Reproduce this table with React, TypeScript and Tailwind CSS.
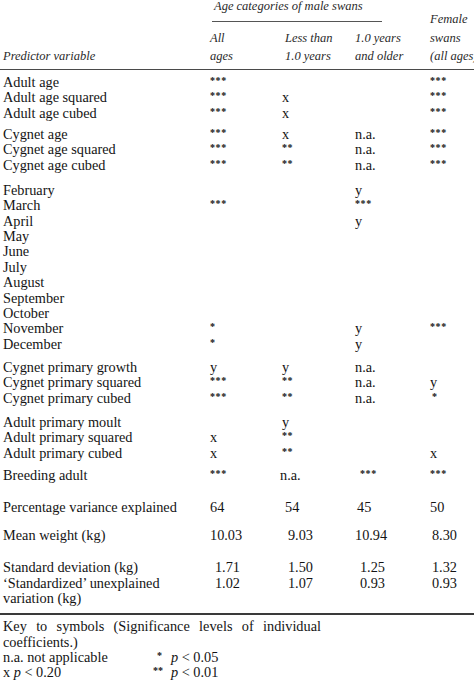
import React from "react";

type Cell = string | null;

const COLS = ["w-[72px]", "w-[73px]", "w-[75px]", "w-[44px]"];

function Sym({ v }: { v: string }) {
  if (/^\*+$/.test(v)) {
    return <span className="relative -top-[3px] text-[10px] font-bold leading-none tracking-[0.6px]">{v}</span>;
  }
  return <span>{v}</span>;
}

function Row({ label, c, off }: { label: React.ReactNode; c: Cell[]; off?: string[] }) {
  return (
    <div className="flex h-[15.4px] leading-[15.4px]">
      <div className="w-[210px] shrink-0 pl-[3px] whitespace-nowrap">{label}</div>
      {c.map((v, i) => (
        <div key={i} className={`${COLS[i]} shrink-0 whitespace-nowrap`}>
          {v ? (
            <div className={off && off[i] ? off[i] : ""}>
              <Sym v={v} />
            </div>
          ) : null}
        </div>
      ))}
    </div>
  );
}

function NumRow({ label, c }: { label: React.ReactNode; c: string[] }) {
  const w = ["w-[30px]", "w-[31px]", "w-[30px]", "w-[27px]"];
  return (
    <div className="flex leading-[15.4px]">
      <div className="w-[210px] shrink-0 pl-[3px]">{label}</div>
      {c.map((v, i) => (
        <div key={i} className={`${COLS[i]} shrink-0 whitespace-nowrap`}>
          <div className={`${w[i]} text-right`}>{v}</div>
        </div>
      ))}
    </div>
  );
}

export default function App() {
  return (
    <div
      className="w-[474px] h-[683px] overflow-hidden bg-white text-[#141414] text-[14.3px]"
      style={{ fontFamily: '"Liberation Serif", "DejaVu Serif", serif' }}
    >
      {/* Header */}
      <div className="flex items-end border-b border-[#4a4a4a] pb-[3px] italic text-[12.5px] text-[#2a2a2a]">
        <div className="w-[210px] shrink-0 pl-[3px] leading-[18.5px]">Predictor variable</div>
        <div className="w-[220px] shrink-0">
          <div className="leading-[12px] pl-[4px] whitespace-nowrap">Age categories of male swans</div>
          <div className="mt-[9px] ml-[2px] w-[170px] h-px bg-[#555]" />
          <div className="mt-[6.75px] flex leading-[18.5px]">
            <div className="w-[72px] shrink-0">
              <div>All</div>
              <div>ages</div>
            </div>
            <div className="w-[73px] shrink-0 pl-[3px]">
              <div>Less than</div>
              <div>1.0 years</div>
            </div>
            <div className="w-[75px] shrink-0">
              <div>1.0 years</div>
              <div>and older</div>
            </div>
          </div>
        </div>
        <div className="whitespace-nowrap leading-[18.5px]">
          <div>Female</div>
          <div>swans</div>
          <div>(all ages)</div>
        </div>
      </div>

      {/* Body */}
      <div className="mt-[5px]">
        <Row label="Adult age" c={["***", null, null, "***"]} />
        <Row label="Adult age squared" c={["***", "x", null, "***"]} />
        <Row label="Adult age cubed" c={["***", "x", null, "***"]} />
      </div>
      <div className="mt-[6px]">
        <Row label="Cygnet age" c={["***", "x", "n.a.", "***"]} />
        <Row label="Cygnet age squared" c={["***", "**", "n.a.", "***"]} />
        <Row label="Cygnet age cubed" c={["***", "**", "n.a.", "***"]} />
      </div>
      <div className="mt-[9.8px]">
        <Row label="February" c={[null, null, "y", null]} />
        <Row label="March" c={["***", null, "***", null]} />
        <Row label="April" c={[null, null, "y", null]} />
        <Row label="May" c={[null, null, null, null]} />
        <Row label="June" c={[null, null, null, null]} />
        <Row label="July" c={[null, null, null, null]} />
        <Row label="August" c={[null, null, null, null]} />
        <Row label="September" c={[null, null, null, null]} />
        <Row label="October" c={[null, null, null, null]} />
        <Row label="November" c={["*", null, "y", "***"]} />
        <Row label="December" c={["*", null, "y", null]} />
      </div>
      <div className="mt-[7.6px]">
        <Row label="Cygnet primary growth" c={["y", "y", "n.a.", null]} />
        <Row label="Cygnet primary squared" c={["***", "**", "n.a.", "y"]} />
        <Row label="Cygnet primary cubed" c={["***", "**", "n.a.", "*"]} off={["", "", "", "pl-[2px]"]} />
      </div>
      <div className="mt-[8.8px]">
        <Row label="Adult primary moult" c={[null, "y", null, null]} />
        <Row label="Adult primary squared" c={["x", "**", null, null]} />
        <Row label="Adult primary cubed" c={["x", "**", null, "x"]} />
      </div>
      <div className="mt-[6.8px]">
        <Row label="Breeding adult" c={["***", "n.a.", "***", "***"]} off={["", "-ml-[2px]", "pl-[5px]", ""]} />
      </div>
      <div className="mt-[16.6px]">
        <Row label="Percentage variance explained" c={["64", "54", "45", "50"]} off={["", "pl-[3px]", "pl-[2px]", ""]} />
      </div>
      <div className="mt-[13px]">
        <NumRow label="Mean weight (kg)" c={["10.03", "9.03", "10.94", "8.30"]} />
      </div>
      <div className="mt-[16.6px]">
        <NumRow label="Standard deviation (kg)" c={["1.71", "1.50", "1.25", "1.32"]} />
        <NumRow
          label={
            <>
              ‘Standardized’ unexplained
              <br />
              variation (kg)
            </>
          }
          c={["1.02", "1.07", "0.93", "0.93"]}
        />
      </div>

      {/* Footer */}
      <div className="mt-[7px] h-[2px] bg-[#3a3a3a]" />
      <div className="mt-[4px] pl-[3px] leading-[15.2px]">
        <p className="w-[318px] text-justify">
          Key to symbols (Significance levels of individual coefficients.)
        </p>
        <div className="flex">
          <div className="w-[154px] shrink-0">n.a. not applicable</div>
          <div>
            <span className="relative -top-[3px] text-[10px] font-bold leading-none">*</span>
            <span className="ml-[9px] italic">p</span> &lt; 0.05
          </div>
        </div>
        <div className="flex">
          <div className="w-[150px] shrink-0">
            x <span className="italic">p</span> &lt; 0.20
          </div>
          <div>
            <span className="relative -top-[3px] text-[10px] font-bold leading-none">**</span>
            <span className="ml-[8px] italic">p</span> &lt; 0.01
          </div>
        </div>
      </div>
    </div>
  );
}
